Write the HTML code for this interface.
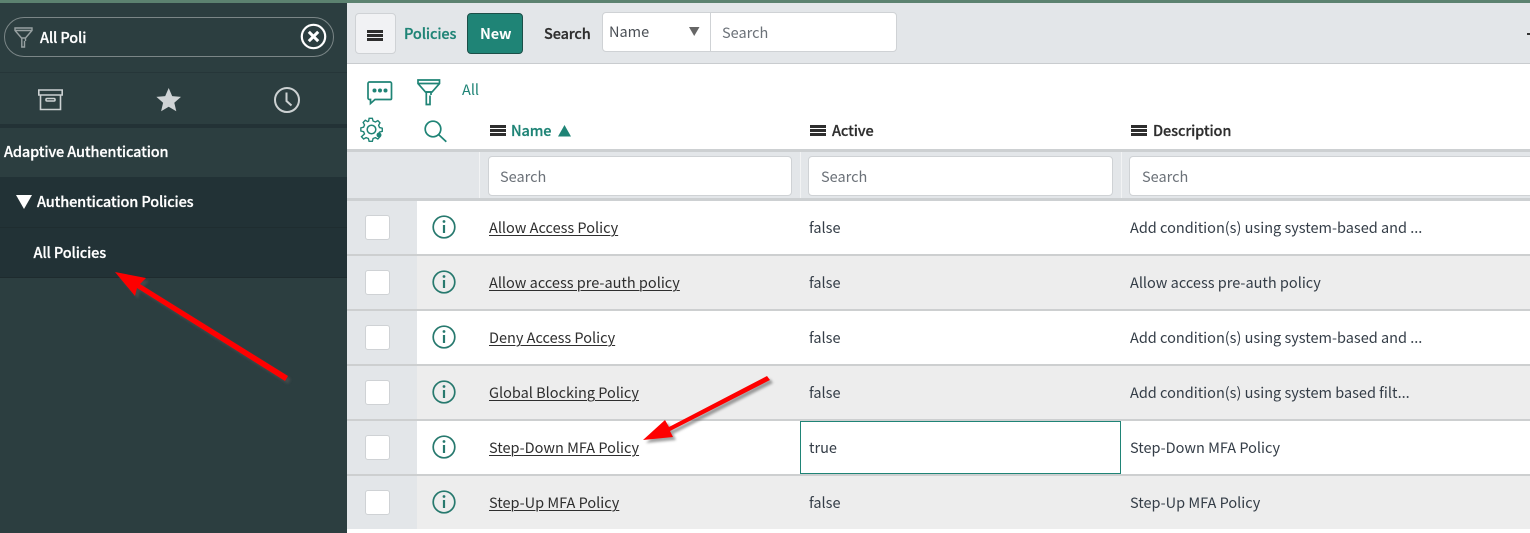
<!DOCTYPE html>
<html><head><meta charset="utf-8">
<style>
*{box-sizing:border-box}
html,body{margin:0;padding:0;width:1530px;height:533px;overflow:hidden;background:#fff}
body{position:relative;font-family:"Noto Sans CJK JP","Liberation Sans",sans-serif;font-size:14.5px;color:#343d47}
.a{position:absolute}
.t{position:absolute;white-space:nowrap;line-height:20px;height:20px;margin-top:1px}
.w{color:#fff;font-weight:500;letter-spacing:-.14px;-webkit-text-stroke:.25px #fff}
.h{font-weight:500;letter-spacing:-.12px;-webkit-text-stroke:.25px currentColor}
.l{text-decoration:underline;text-underline-offset:2px;text-decoration-thickness:1px;color:#2e2e2e}
.s{color:#6b7178}
.box{position:absolute;background:#fff;border:1px solid #cfd2d5;border-radius:3px}
.ham{position:absolute;width:16px;height:11px;border-top:3px solid #2e2e2e;border-bottom:3px solid #2e2e2e}
.ham:after{content:"";position:absolute;left:0;right:0;top:1px;height:3px;background:#2e2e2e}
svg{position:absolute;overflow:visible}
</style></head><body>
<div class="a" style="left:0;top:0;width:1530px;height:3px;background:#5c8270"></div>

<!-- sidebar -->
<div class="a" style="left:0;top:3px;width:347px;height:530px;background:#2c3e40"></div>
<div class="a" style="left:4px;top:17px;width:330px;height:40px;border:1px solid #7b8687;border-radius:20px"></div>
<svg style="left:14px;top:27px" width="20" height="21" fill="none" stroke="#98a1a2" stroke-width="1.4"><path d="M1 1h17v2.500L11.500 11H7.500L1 3.500zM1.500 3.500h16M7.500 11h4v3M7.800 11.500v8.500h2.700v-6"/></svg>
<div class="t w" style="left:40px;top:27px">All Poli</div>
<svg style="left:300px;top:23px" width="27" height="27" fill="none" stroke="#fff"><circle cx="13.500" cy="13.500" r="11.700" stroke-width="2.200"/><path d="M8.800 8.800l9.400 9.400M18.200 8.800l-9.400 9.400" stroke-width="3"/></svg>
<div class="a" style="left:0;top:72px;width:347px;height:1px;background:#263639"></div>
<svg style="left:38px;top:89px" width="26" height="22" fill="none" stroke="#ccd1d2" stroke-width="1.600"><path d="M.8 1h23.400v5H.8zM2.500 6v14.500h20V6"/><rect x="8" y="9.500" width="9" height="2.500" rx="1"/></svg>
<svg style="left:156px;top:87px" width="26" height="26" fill="#cfd3d5"><path d="M12.700 1l3.500 8.100 8.800.8-6.700 5.800 2 8.600-7.600-4.500-7.600 4.500 2-8.600L.4 9.900l8.800-.8z"/></svg>
<svg style="left:273px;top:86px" width="28" height="28" fill="none" stroke="#ccd1d2" stroke-width="2"><circle cx="14" cy="14" r="12"/><path d="M13.500 6.500v8.500l5 4.500"/></svg>
<div class="a" style="left:0;top:124px;width:347px;height:4px;background:#233236"></div>
<div class="t w" style="left:4px;top:141px">Adaptive Authentication</div>
<div class="a" style="left:0;top:177px;width:347px;height:101px;background:#223236"></div>
<div class="a" style="left:0;top:227px;width:347px;height:1px;background:#1f2d30"></div>
<div class="a" style="left:0;top:277px;width:347px;height:1px;background:#1e2b2e"></div>
<svg style="left:16px;top:195px" width="17" height="15" fill="#fff"><path d="M0 0h16l-8 14z"/></svg>
<div class="t w" style="left:37px;top:191px">Authentication Policies</div>
<div class="t w" style="left:33.500px;top:242px">All Policies</div>

<!-- header -->
<div class="a" style="left:347px;top:3px;width:1183px;height:61px;background:#e3e6e9;border-bottom:1px solid #c9cccf"></div>
<div class="a" style="left:355px;top:13px;width:41px;height:41px;background:#f1f2f4;border:1px solid #cfd2d5;border-radius:4px"></div>
<div class="ham" style="left:367px;top:30px"></div>
<div class="t h" style="left:404px;top:23px;color:#1f8476">Policies</div>
<div class="a" style="left:467px;top:13px;width:56px;height:41px;background:#1f8476;border:1px solid #1c4f48;border-radius:4px"></div>
<div class="t" style="left:480px;top:23px;color:#fff;font-weight:700;letter-spacing:-.1px">New</div>
<div class="t h" style="left:544px;top:23px;color:#2e2e2e">Search</div>
<div class="box" style="left:602px;top:12px;width:295px;height:40px;border-radius:4px"></div>
<div class="a" style="left:710px;top:13px;width:1px;height:38px;background:#cfd2d5"></div>
<div class="t" style="left:609px;top:21px;color:#4a4f55">Name</div>
<svg style="left:689px;top:27px" width="11" height="9" fill="#666"><path d="M0 0h10.500L5.200 9z"/></svg>
<div class="t s" style="left:722px;top:22px">Search</div>
<div class="a" style="left:1527px;top:33px;width:3px;height:1.500px;background:#333"></div>

<!-- toolbar icons -->
<svg style="left:367px;top:81px" width="26" height="24" fill="none" stroke="#1f8476" stroke-width="1.700"><path d="M2.500 1h20.500a1.500 1.500 0 0 1 1.500 1.500v15a1 1 0 0 1-1 1H8L3.500 22.500v-4H2.500a1.500 1.500 0 0 1-1.500-1.500V2.500A1.500 1.500 0 0 1 2.500 1z"/><g fill="#1f8476" stroke="none"><circle cx="7.500" cy="9.500" r="2"/><circle cx="13" cy="9.500" r="2"/><circle cx="18.500" cy="9.500" r="2"/></g></svg>
<svg style="left:417px;top:79px" width="24" height="27" fill="none" stroke="#1f8476" stroke-width="1.700"><path d="M1 1h21.500v3.500L15 13H8.500L1 4.500zM1.500 4.500h20.500"/><path d="M9 13h5v3M9.300 13.500V25.500h3.700v-9"/></svg>
<div class="t" style="left:462px;top:79px;color:#1f8476">All</div>
<svg style="left:359px;top:117px" width="25" height="25" fill="none" stroke="#1f8476" stroke-width="1.500"><path d="M10.500 2h3.500l.8 3 2.500 1 2.700-1.500 2.300 2.500-1.500 2.600 1 2.400 3 .8v3.400l-3 .8-1 2.400 1.500 2.600-2.300 2.500-2.700-1.500-2.500 1-.8 3h-3.500l-.8-3-2.500-1-2.700 1.500-2.300-2.500L5.500 19l-1-2.400-3-.8v-3.400l3-.8 1-2.400L4 6.600 6.300 4.100 9 5.600l1-.6z" transform="scale(.92) translate(.5 -.6)"/><circle cx="12.500" cy="12.500" r="4.300"/><circle cx="20" cy="18" r="2.500" fill="#1f8476" stroke="none"/></svg>
<svg style="left:424px;top:120px" width="24" height="23" fill="none" stroke="#1f8476" stroke-width="1.700"><circle cx="9" cy="9" r="7.800"/><path d="M14.800 14.800l7.500 7"/></svg>

<!-- column headers -->
<div class="ham" style="left:490px;top:125px"></div>
<div class="t h" style="left:511px;top:120px;color:#1f8476">Name</div>
<svg style="left:558px;top:125px" width="14" height="12" fill="#1f8476"><path d="M6.500 0L13 11.500H0z"/></svg>
<div class="ham" style="left:810px;top:125px"></div>
<div class="t h" style="left:832px;top:120px;color:#2e2e2e">Active</div>
<div class="ham" style="left:1131px;top:125px"></div>
<div class="t h" style="left:1153px;top:120px;color:#2e2e2e">Description</div>

<!-- filter row -->
<div class="a" style="left:347px;top:149px;width:1183px;height:3px;background:#cdd0d2"></div>
<div class="a" style="left:347px;top:152px;width:1183px;height:46px;background:#e3e6e9"></div>
<div class="a" style="left:479px;top:152px;width:1px;height:46px;background:#f2f3f4"></div>
<div class="a" style="left:800px;top:152px;width:1px;height:46px;background:#f2f3f4"></div>
<div class="a" style="left:1121px;top:152px;width:1px;height:46px;background:#f2f3f4"></div>
<div class="box" style="left:488px;top:156px;width:304px;height:40px;border-radius:4px"></div>
<div class="box" style="left:808px;top:156px;width:305px;height:40px;border-radius:4px"></div>
<div class="box" style="left:1129px;top:156px;width:410px;height:40px;border-radius:4px"></div>
<div class="t s" style="left:500px;top:166px">Search</div>
<div class="t s" style="left:821px;top:166px">Search</div>
<div class="t s" style="left:1142px;top:166px">Search</div>
<div class="a" style="left:347px;top:198px;width:1183px;height:3px;background:#cdd0d2"></div>

<!-- rows backgrounds -->
<div class="a" style="left:347px;top:201px;width:70px;height:328px;background:#e3e6e9"></div>
<div class="a" style="left:417px;top:256px;width:1113px;height:53px;background:#ededed"></div>
<div class="a" style="left:417px;top:366px;width:1113px;height:53px;background:#ededed"></div>
<div class="a" style="left:417px;top:476px;width:1113px;height:53px;background:#ededed"></div>
<div class="a" style="left:347px;top:254px;width:1183px;height:2px;background:#cdcfd0"></div>
<div class="a" style="left:347px;top:309px;width:1183px;height:2px;background:#cdcfd0"></div>
<div class="a" style="left:347px;top:364px;width:1183px;height:2px;background:#cdcfd0"></div>
<div class="a" style="left:347px;top:419px;width:1183px;height:2px;background:#cdcfd0"></div>
<div class="a" style="left:347px;top:474px;width:1183px;height:2px;background:#cdcfd0"></div>

<!-- checkboxes -->
<div class="box" style="left:365px;top:215px;width:25px;height:25px"></div>
<div class="box" style="left:365px;top:270px;width:25px;height:25px"></div>
<div class="box" style="left:365px;top:325px;width:25px;height:25px"></div>
<div class="box" style="left:365px;top:380px;width:25px;height:25px"></div>
<div class="box" style="left:365px;top:435px;width:25px;height:25px"></div>
<div class="box" style="left:365px;top:490px;width:25px;height:25px"></div>

<!-- info icons -->
<svg style="left:432px;top:215px" width="24" height="24" fill="none" stroke="#27796e" stroke-width="1.700"><circle cx="12" cy="12" r="10.800"/><path d="M12 10v8" stroke-width="2.200"/><circle cx="12" cy="6.500" r="1.400" fill="#27796e" stroke="none"/></svg>
<svg style="left:432px;top:270px" width="24" height="24" fill="none" stroke="#27796e" stroke-width="1.700"><circle cx="12" cy="12" r="10.800"/><path d="M12 10v8" stroke-width="2.200"/><circle cx="12" cy="6.500" r="1.400" fill="#27796e" stroke="none"/></svg>
<svg style="left:432px;top:325px" width="24" height="24" fill="none" stroke="#27796e" stroke-width="1.700"><circle cx="12" cy="12" r="10.800"/><path d="M12 10v8" stroke-width="2.200"/><circle cx="12" cy="6.500" r="1.400" fill="#27796e" stroke="none"/></svg>
<svg style="left:432px;top:380px" width="24" height="24" fill="none" stroke="#27796e" stroke-width="1.700"><circle cx="12" cy="12" r="10.800"/><path d="M12 10v8" stroke-width="2.200"/><circle cx="12" cy="6.500" r="1.400" fill="#27796e" stroke="none"/></svg>
<svg style="left:432px;top:435px" width="24" height="24" fill="none" stroke="#27796e" stroke-width="1.700"><circle cx="12" cy="12" r="10.800"/><path d="M12 10v8" stroke-width="2.200"/><circle cx="12" cy="6.500" r="1.400" fill="#27796e" stroke="none"/></svg>
<svg style="left:432px;top:490px" width="24" height="24" fill="none" stroke="#27796e" stroke-width="1.700"><circle cx="12" cy="12" r="10.800"/><path d="M12 10v8" stroke-width="2.200"/><circle cx="12" cy="6.500" r="1.400" fill="#27796e" stroke="none"/></svg>

<!-- rows text -->
<div class="t l" style="left:489px;top:217px">Allow Access Policy</div>
<div class="t" style="left:809px;top:217px">false</div>
<div class="t" style="left:1130px;top:217px">Add condition(s) using system-based and ...</div>
<div class="t l" style="left:489px;top:272px">Allow access pre-auth policy</div>
<div class="t" style="left:809px;top:272px">false</div>
<div class="t" style="left:1130px;top:272px">Allow access pre-auth policy</div>
<div class="t l" style="left:489px;top:327px">Deny Access Policy</div>
<div class="t" style="left:809px;top:327px">false</div>
<div class="t" style="left:1130px;top:327px">Add condition(s) using system-based and ...</div>
<div class="t l" style="left:489px;top:382px">Global Blocking Policy</div>
<div class="t" style="left:809px;top:382px">false</div>
<div class="t" style="left:1130px;top:382px">Add condition(s) using system based filt...</div>
<div class="t l" style="left:489px;top:437px">Step-Down MFA Policy</div>
<div class="a" style="left:800px;top:421px;width:321px;height:53px;background:#fff;border:1.500px solid #1f8476"></div>
<div class="t" style="left:809px;top:437px">true</div>
<div class="t" style="left:1130px;top:437px">Step-Down MFA Policy</div>
<div class="t l" style="left:489px;top:492px">Step-Up MFA Policy</div>
<div class="t" style="left:809px;top:492px">false</div>
<div class="t" style="left:1130px;top:492px">Step-Up MFA Policy</div>

<!-- annotation arrows -->
<svg style="left:0;top:0" width="1530" height="533">
<defs><filter id="sh" x="-20%" y="-20%" width="140%" height="140%"><feGaussianBlur stdDeviation="1.300"/></filter></defs>
<g fill="#555" opacity=".55" filter="url(#sh)" transform="translate(3 3)">
<path d="M115 272l31 6-6 6 148 92-3 5-148-93-2 8z"/>
<path d="M643 440l22-20 4 7 98-51 3 4-100 51 3 6z"/>
</g>
<g fill="#fe0000">
<path d="M115 272l31 6-6 6 148 92-3 5-148-93-2 8z"/>
<path d="M643 440l22-20 4 7 98-51 3 4-100 51 3 6z"/>
</g>
</svg>
</body></html>
